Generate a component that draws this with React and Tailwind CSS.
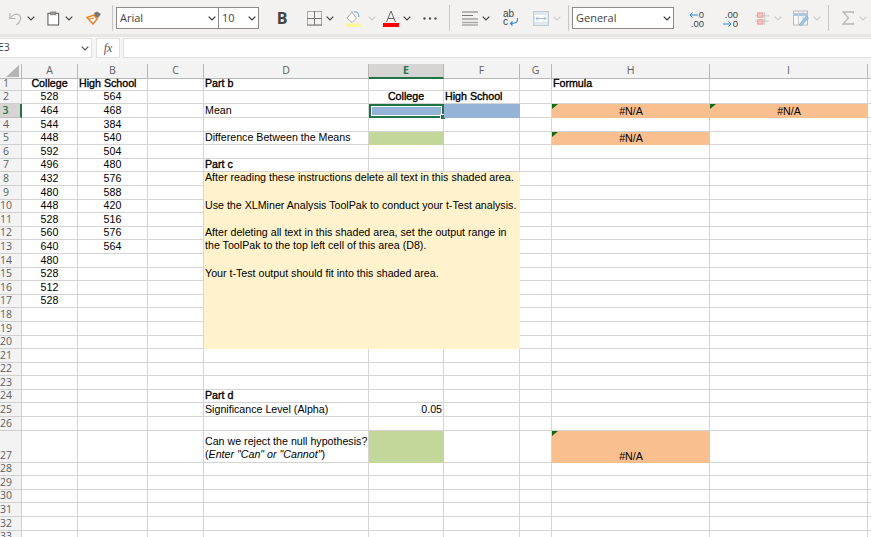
import React from 'react'

const ui = 'font-["Open_Sans",sans-serif]'
const heavy = '[-webkit-text-stroke:0.35px_black]'

const Chevron = ({ className = 'text-[#444]', ml = 'ml-[5px]' }) => (
  <svg viewBox="0 0 8 5" className={`w-[8px] h-[5px] ${ml} ${className}`} fill="none" stroke="currentColor" strokeWidth="1.2">
    <path d="M0.7 0.7 L4 4 L7.3 0.7" />
  </svg>
)

const Sep = ({ ml }) => <div className={`w-px h-[26px] bg-[#c8c6c4] ${ml}`} />

const Undo = () => (
  <svg viewBox="0 0 16 16" className="w-[15px] h-[15px]" fill="none" stroke="#b5b5b5" strokeWidth="1.2">
    <path d="M2 2 V8 H8" />
    <path d="M2.5 7.5 C5 3.5 9 2.5 11.5 4 C15 6.5 14 11 9 15" />
  </svg>
)

const Clipboard = () => (
  <svg viewBox="0 0 14 16" className="w-[13px] h-[15px]" fill="none">
    <rect x="1" y="2.5" width="11.5" height="12.5" fill="#fff" stroke="#666" strokeWidth="1.2" />
    <rect x="4" y="1" width="5.5" height="3" fill="#999" stroke="#777" strokeWidth="0.8" />
  </svg>
)

const Brush = () => (
  <svg viewBox="0 0 16 14" className="w-[16px] h-[14px]" fill="none">
    <path d="M8 2 L11 0.5 L15 3 L12 7 L9 6 Z" fill="#777" />
    <path d="M1 6.5 L8 4 L11 8 L7 13 Z" fill="#fff" stroke="#e8811f" strokeWidth="1.4" />
    <path d="M3 8 L8 7" stroke="#e8811f" strokeWidth="1.2" />
  </svg>
)

const Bold = () => <span className={`${ui} text-[16px] leading-none font-bold text-[#444]`}>B</span>

const Borders = () => (
  <svg viewBox="0 0 15 15" className="w-[15px] h-[15px]" fill="none" stroke="#a8a8a8">
    <rect x="0.5" y="0.5" width="14" height="14" />
    <path d="M7.5 0 V15 M0 7.5 H15" stroke="#777" />
    <path d="M0 14 H15" stroke="#999" strokeWidth="1.5" />
  </svg>
)

const Fill = () => (
  <svg viewBox="0 0 16 17" className="w-[16px] h-[17px]" fill="none">
    <path d="M2 8 L7 2.5 L11.5 8 L7 12.5 Z" fill="#fff" stroke="#aaa" />
    <path d="M7 2.5 V0.8" stroke="#aaa" />
    <path d="M9 2 C12 1 14 3 14 7" stroke="#8fbde0" strokeWidth="1.4" />
    <rect x="0" y="13.5" width="16" height="3.5" fill="#fbf59b" />
  </svg>
)

const FontColor = () => (
  <svg viewBox="0 0 16 17" className="w-[16px] h-[17px]" fill="none">
    <path d="M3.5 12 L8 1 L12.5 12 M5 8.5 H11" stroke="#666" strokeWidth="1" />
    <rect x="0" y="13" width="16" height="4" fill="#f00" />
  </svg>
)

const Dots = () => (
  <svg viewBox="0 0 14 3" className="w-[14px] h-[3px]" fill="#555">
    <circle cx="1.5" cy="1.5" r="1.2" />
    <circle cx="7" cy="1.5" r="1.2" />
    <circle cx="12.5" cy="1.5" r="1.2" />
  </svg>
)

const Align = () => (
  <svg viewBox="0 0 16 15" className="w-[16px] h-[15px]" stroke="#777" fill="none">
    <path d="M0 1 H16 M0 4.5 H11 M0 8 H16" />
    <path d="M0 11.5 H16 M0 14 H16" stroke="#aaa" strokeWidth="1.5" />
  </svg>
)

const Wrap = () => (
  <div className="relative w-[15px] h-[17px]">
    <span className="absolute left-0 top-[-1px] text-[10px] leading-[10px] text-[#444] font-['Liberation_Sans',sans-serif]">ab</span>
    <span className="absolute left-0 top-[7px] text-[10px] leading-[10px] text-[#444] font-['Liberation_Sans',sans-serif]">c</span>
    <svg viewBox="0 0 10 8" className="absolute left-[6px] top-[8px] w-[10px] h-[8px]" fill="none" stroke="#2a8ad4" strokeWidth="1.1">
      <path d="M8.5 0 V2 C8.5 5 6 5.5 1.5 5.5 M3.5 3.5 L1.5 5.5 L3.5 7.5" />
    </svg>
  </div>
)

const Merge = () => (
  <svg viewBox="0 0 16 15" className="w-[16px] h-[15px]" fill="none">
    <rect x="0.5" y="0.5" width="15" height="14" fill="#dfe6ec" stroke="#c4ccd2" />
    <rect x="2" y="4" width="12" height="7" fill="#fff" />
    <path d="M3 7.5 H13 M5 5.5 L3 7.5 L5 9.5 M11 5.5 L13 7.5 L11 9.5" stroke="#8fbde0" />
  </svg>
)

const DecimalUp = () => (
  <div className="relative w-[15px] h-[17px] font-['Liberation_Sans',sans-serif] text-[9.5px] leading-[9px] text-[#444]">
    <span className="absolute right-0 top-0">0</span>
    <span className="absolute right-0 top-[9px]">.00</span>
    <svg viewBox="0 0 9 6" className="absolute left-0 top-[2px] w-[9px] h-[6px]" fill="none" stroke="#2a8ad4">
      <path d="M9 3 H1 M3.5 0.5 L1 3 L3.5 5.5" />
    </svg>
  </div>
)

const DecimalDown = () => (
  <div className="relative w-[15px] h-[17px] font-['Liberation_Sans',sans-serif] text-[9.5px] leading-[9px] text-[#444]">
    <span className="absolute right-0 top-0">.00</span>
    <span className="absolute right-0 top-[9px]">0</span>
    <svg viewBox="0 0 9 6" className="absolute left-0 top-[11px] w-[9px] h-[6px]" fill="none" stroke="#2a8ad4">
      <path d="M0 3 H8 M5.5 0.5 L8 3 L5.5 5.5" />
    </svg>
  </div>
)

const CondFormat = () => (
  <svg viewBox="0 0 16 15" className="w-[14px] h-[15px]" fill="none">
    <path d="M0 4.5 H16 M0 10.5 H16 M11 0 V15" stroke="#c4c4c4" />
    <rect x="3" y="1" width="6" height="5" fill="#f6c0c0" stroke="#eb9a9a" />
    <rect x="3" y="9" width="6" height="5" fill="#f6c0c0" stroke="#eb9a9a" />
  </svg>
)

const TableFormat = () => (
  <svg viewBox="0 0 16 16" className="w-[16px] h-[16px]" fill="none">
    <rect x="0.5" y="1" width="14" height="14" fill="#f6f6f6" stroke="#bbb" />
    <path d="M0.5 4.5 H14.5" stroke="#a9c8e6" strokeWidth="3" />
    <path d="M5.5 1 V15 M10 1 V15" stroke="#ccc" />
    <path d="M6 15 L13 6 L15.5 8 L8.5 15.5 Z" fill="#9fc4e6" stroke="#7aa9d3" strokeWidth="0.6" />
  </svg>
)

const Sigma = () => (
  <svg viewBox="0 0 12 14" className="w-[12px] h-[14px]" fill="none" stroke="#b8b8b8" strokeWidth="1.3">
    <path d="M11.5 2.5 V1 H1 L6.5 7 L1 13 H11.5 V11.5" />
  </svg>
)

const Dropdown = ({ children, width }) => (
  <div className={`${width} h-[22px] border border-[#8a8a8a] bg-white flex items-center justify-between pr-[2px] pl-[3px] ${ui} text-[11px] text-[#444]`}>
    {children}
    <Chevron ml="ml-0" className="text-[#333]" />
  </div>
)

const Toolbar = () => (
  <div className="h-[34px] pt-[2px] bg-[#f3f2f1] flex items-center">
    <div className="ml-[8px]"><Undo /></div>
    <Chevron ml="ml-[4px]" />
    <div className="ml-[12px]"><Clipboard /></div>
    <Chevron />
    <div className="ml-[13px]"><Brush /></div>
    <Sep ml="ml-[10px]" />
    <div className="ml-[3px] flex">
      <Dropdown width="w-[103px]">Arial</Dropdown>
      <Dropdown width="w-[41px] -ml-px">10</Dropdown>
    </div>
    <div className="ml-[18px] w-[10px] flex justify-center"><Bold /></div>
    <div className="ml-[20px]"><Borders /></div>
    <Chevron ml="ml-[4px]" />
    <div className="ml-[11px]"><Fill /></div>
    <Chevron className="text-[#ccc]" ml="ml-[7px]" />
    <div className="ml-[7px]"><FontColor /></div>
    <Chevron ml="ml-[4px]" />
    <div className="ml-[12px]"><Dots /></div>
    <Sep ml="ml-[12px]" />
    <div className="ml-[12px]"><Align /></div>
    <Chevron ml="ml-[4px]" />
    <div className="ml-[13px]"><Wrap /></div>
    <div className="ml-[15px]"><Merge /></div>
    <Chevron className="text-[#ccc]" ml="ml-[4px]" />
    <Sep ml="ml-[7px]" />
    <div className="ml-[3px]"><Dropdown width="w-[102px]">General</Dropdown></div>
    <div className="ml-[15px]"><DecimalUp /></div>
    <div className="ml-[19px]"><DecimalDown /></div>
    <div className="ml-[17px]"><CondFormat /></div>
    <Chevron className="text-[#ccc]" />
    <div className="ml-[11px]"><TableFormat /></div>
    <Chevron className="text-[#ccc]" ml="ml-[4px]" />
    <Sep ml="ml-[7px]" />
    <div className="ml-[13px]"><Sigma /></div>
    <Chevron className="text-[#ccc]" />
  </div>
)

const FormulaBar = () => (
  <div className="h-[30px] bg-[#f5f5f5] border-t-[3px] border-[#e6e5e4] flex items-start pt-[1px]">
    <div className={`w-[92px] h-[20px] bg-white border border-l-0 border-[#e1e1e1] flex items-center justify-between pr-[2px] ${ui} text-[10.5px] text-[#444]`}>
      <span className="-ml-[2px]">E3</span>
      <Chevron ml="ml-0" className="text-[#555]" />
    </div>
    <div className="ml-[4px] w-[24px] h-[20px] bg-white border border-[#e1e1e1] flex items-center justify-center font-['Liberation_Serif',serif] italic text-[12px] text-[#555]">
      fx
    </div>
    <div className="ml-[3px] flex-1 h-[20px] bg-white border border-r-0 border-[#e1e1e1]" />
  </div>
)

const letters = ['A', 'B', 'C', 'D', 'E', 'F', 'G', 'H', 'I', '']

const ColHeaders = () => (
  <>
    <div className="bg-[#f3f3f3] border-r border-b border-[#b8b8b8] flex justify-end items-end pr-[2px] pb-[1px]">
      <div className="w-0 h-0 border-l-[13px] border-l-transparent border-b-[12px] border-b-[#b5b5b5]" />
    </div>
    {letters.map((l) =>
      l === 'E' ? (
        <div key={l} className={`bg-[#d6d5d3] border-b-2 border-[#217346] border-r border-r-[#b8b8b8] flex items-center justify-center ${ui} text-[10.5px] font-bold text-[#217346]`}>E</div>
      ) : (
        <div key={l || 'J'} className={`bg-[#f3f3f3] border-r border-b border-[#b8b8b8] flex items-center justify-center ${ui} text-[10.5px] text-[#616161]`}>{l}</div>
      )
    )}
  </>
)

const RowHeader = ({ n }) =>
  n === 3 ? (
    <div className={`bg-[#d6d5d3] border-r-2 border-b border-r-[#217346] border-b-[#bdbdbd] pr-[9px] flex items-end justify-center ${ui} text-[10.5px] leading-[13px] font-semibold text-[#217346]`}>{n}</div>
  ) : (
    <div className={`bg-[#f3f3f3] border-r border-b border-[#cfcfcf] pr-[9px] flex items-end justify-center ${ui} text-[10.5px] leading-[13px] text-[#616161]`}>{n}</div>
  )

const Flag = () => (
  <div className="absolute left-0 top-0 w-0 h-0 border-t-[5px] border-t-[#0f6b0f] border-r-[6px] border-r-transparent" />
)

const Cell = ({ children, className = '' }) => (
  <div className={`px-[1px] flex items-end whitespace-nowrap text-[10.67px] leading-[14px] text-black border-r border-b border-[#d4d4d4] ${className}`}>
    {children}
  </div>
)

const Filled = ({ color, children, flag }) => (
  <div className={`relative ${color} flex items-end justify-center text-[10.67px] leading-[14px] text-black`}>
    {flag && <Flag />}
    {children}
  </div>
)

const Instructions = () => (
  <div className="row-span-13 col-span-3 bg-[#fff2cc] pl-[1px] text-[10.67px] leading-[13.6px] text-black whitespace-nowrap">
    <div className="-mt-[1px]">After reading these instructions delete all text in this shaded area.</div>
    <div className="mt-[13.6px]">Use the XLMiner Analysis ToolPak to conduct your t-Test analysis.</div>
    <div className="mt-[13.6px]">After deleting all text in this shaded area, set the output range in</div>
    <div>the ToolPak to the top left cell of this area (D8).</div>
    <div className="mt-[13.6px]">Your t-Test output should fit into this shaded area.</div>
  </div>
)

const colA = [528, 464, 544, 448, 592, 496, 432, 480, 448, 528, 560, 640, 480, 528, 512, 528]
const colB = [564, 468, 384, 540, 504, 480, 576, 588, 420, 516, 576, 564]

const blue = 'bg-[#95b3d7]'
const green = 'bg-[#c4d79b]'
const orange = 'bg-[#fabf8f]'

// columns D to I of a row
const restOfRow = (n) => {
  const e = () => <Cell />
  switch (n) {
    case 1:
      return (
        <>
          <Cell className={heavy}>Part b</Cell>
          {e()}{e()}{e()}
          <Cell className={heavy}>Formula</Cell>
          {e()}
        </>
      )
    case 2:
      return (
        <>
          {e()}
          <Cell className={`${heavy} justify-center`}>College</Cell>
          <Cell className={heavy}>High School</Cell>
          {e()}{e()}{e()}
        </>
      )
    case 3:
      return (
        <>
          <Cell>Mean</Cell>
          <div className={`relative ${blue} border-2 border-[#217346] shadow-[inset_0_0_0_1px_white]`}>
            <div className="absolute -right-[4px] -bottom-[4px] w-[6px] h-[6px] bg-[#217346] border border-white" />
          </div>
          <Filled color={blue} />
          {e()}
          <Filled color={orange} flag>#N/A</Filled>
          <Filled color={orange} flag>#N/A</Filled>
        </>
      )
    case 5:
      return (
        <>
          <Cell>Difference Between the Means</Cell>
          <Filled color={green} />
          {e()}{e()}
          <Filled color={orange} flag>#N/A</Filled>
          {e()}
        </>
      )
    case 7:
      return (
        <>
          <Cell className={heavy}>Part c</Cell>
          {e()}{e()}{e()}{e()}{e()}
        </>
      )
    case 24:
      return (
        <>
          <Cell className={heavy}>Part d</Cell>
          {e()}{e()}{e()}{e()}{e()}
        </>
      )
    case 25:
      return (
        <>
          <Cell>Significance Level (Alpha)</Cell>
          <Cell className="justify-end">0.05</Cell>
          {e()}{e()}{e()}{e()}
        </>
      )
    case 27:
      return (
        <>
          <Cell>
            <div className="leading-[13.5px]">
              <div>Can we reject the null hypothesis?</div>
              <div>(<i>Enter "Can" or "Cannot"</i>)</div>
            </div>
          </Cell>
          <Filled color={green} />
          {e()}{e()}
          <Filled color={orange} flag>#N/A</Filled>
          {e()}
        </>
      )
    default:
      if (n >= 8 && n <= 20) {
        return (
          <>
            {n === 8 && <Instructions />}
            {e()}{e()}{e()}
          </>
        )
      }
      return (
        <>
          {e()}{e()}{e()}{e()}{e()}{e()}
        </>
      )
  }
}

const Sheet = () => {
  const rows = Array.from({ length: 33 }, (_, i) => i + 1)
  return (
    <div className="grid grid-cols-[22px_56px_70px_56px_165px_75px_76px_32px_158px_158px_4px] grid-rows-[15px_12px_13px_14px_repeat(23,13.6px)_32px_repeat(6,13.6px)] font-['Liberation_Sans',Arial,sans-serif]">
      <ColHeaders />
      {rows.map((n) => (
        <React.Fragment key={n}>
          <RowHeader n={n} />
          <Cell className={`justify-center ${n === 1 ? heavy : ''}`}>
            {n === 1 ? 'College' : colA[n - 2]}
          </Cell>
          <Cell className={n === 1 ? heavy : 'justify-center'}>
            {n === 1 ? 'High School' : colB[n - 2]}
          </Cell>
          <Cell />
          {restOfRow(n)}
          <Cell />
        </React.Fragment>
      ))}
    </div>
  )
}

export default function App() {
  return (
    <div className="h-[537px] w-[871px] overflow-hidden bg-white">
      <Toolbar />
      <FormulaBar />
      <Sheet />
    </div>
  )
}
